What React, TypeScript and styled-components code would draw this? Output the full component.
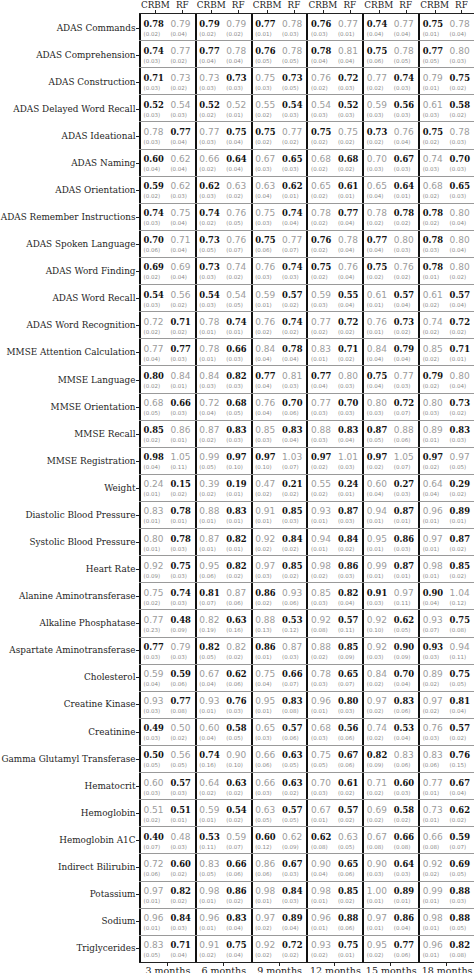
import React from "react";
import styled, { createGlobalStyle } from "styled-components";

const GlobalStyle = createGlobalStyle`
  html, body {
    margin: 0;
    padding: 0;
    background: #ffffff;
    overflow: hidden;
  }
  body {
    font-family: "DejaVu Serif", "Liberation Serif", serif;
  }
`;

const GROUPS = ["3 months", "6 months", "9 months", "12 months", "15 months", "18 months"];

// each group: crbm rf crbmStd rfStd, "*" marks the bold (better) value
const ROWS: [string, string][] = [
  ["ADAS Commands", "*0.78 0.79 0.02 0.04|*0.79 0.79 0.02 0.02|*0.77 0.78 0.01 0.03|*0.76 0.77 0.03 0.01|*0.74 0.77 0.04 0.04|*0.75 0.78 0.01 0.04"],
  ["ADAS Comprehension", "*0.74 0.77 0.03 0.02|*0.77 0.78 0.04 0.04|*0.76 0.78 0.05 0.05|*0.78 0.81 0.04 0.04|*0.75 0.78 0.06 0.05|*0.77 0.80 0.05 0.03"],
  ["ADAS Construction", "*0.71 0.73 0.03 0.02|0.73 *0.73 0.03 0.03|0.75 *0.73 0.03 0.05|0.76 *0.72 0.02 0.03|0.77 *0.74 0.02 0.03|0.79 *0.75 0.01 0.02"],
  ["ADAS Delayed Word Recall", "*0.52 0.54 0.03 0.03|*0.52 0.52 0.02 0.01|0.55 *0.54 0.02 0.03|0.54 *0.52 0.03 0.03|0.59 *0.56 0.03 0.03|0.61 *0.58 0.03 0.02"],
  ["ADAS Ideational", "0.78 *0.77 0.03 0.04|0.77 *0.75 0.03 0.04|*0.75 0.77 0.02 0.02|*0.75 0.75 0.02 0.02|*0.73 0.76 0.02 0.04|*0.75 0.78 0.02 0.03"],
  ["ADAS Naming", "*0.60 0.62 0.04 0.04|0.66 *0.64 0.02 0.04|0.67 *0.65 0.03 0.03|0.68 *0.68 0.02 0.02|0.70 *0.67 0.03 0.03|0.74 *0.70 0.03 0.03"],
  ["ADAS Orientation", "*0.59 0.62 0.02 0.03|*0.62 0.63 0.03 0.02|0.63 *0.62 0.04 0.01|0.65 *0.61 0.02 0.01|0.65 *0.64 0.04 0.01|0.68 *0.65 0.02 0.03"],
  ["ADAS Remember Instructions", "*0.74 0.75 0.03 0.04|*0.74 0.76 0.02 0.05|0.75 *0.74 0.03 0.04|0.78 *0.77 0.02 0.04|0.78 *0.78 0.02 0.02|*0.78 0.80 0.02 0.04"],
  ["ADAS Spoken Language", "*0.70 0.71 0.06 0.04|*0.73 0.76 0.05 0.07|*0.75 0.77 0.06 0.07|*0.76 0.78 0.02 0.04|*0.77 0.80 0.04 0.03|*0.78 0.80 0.03 0.04"],
  ["ADAS Word Finding", "*0.69 0.69 0.02 0.04|*0.73 0.74 0.03 0.02|0.76 *0.74 0.03 0.03|*0.75 0.76 0.02 0.04|*0.75 0.76 0.02 0.02|*0.78 0.80 0.01 0.02"],
  ["ADAS Word Recall", "*0.54 0.56 0.03 0.02|*0.54 0.54 0.03 0.05|0.59 *0.57 0.01 0.02|0.59 *0.55 0.03 0.04|0.61 *0.57 0.01 0.04|0.61 *0.57 0.02 0.04"],
  ["ADAS Word Recognition", "0.72 *0.71 0.02 0.02|0.78 *0.74 0.01 0.01|0.76 *0.74 0.02 0.02|0.77 *0.72 0.02 0.02|0.76 *0.73 0.01 0.02|0.74 *0.72 0.02 0.02"],
  ["MMSE Attention Calculation", "0.77 *0.77 0.04 0.03|0.78 *0.66 0.01 0.03|0.84 *0.78 0.04 0.04|0.83 *0.71 0.01 0.02|0.84 *0.79 0.04 0.04|0.85 *0.71 0.02 0.01"],
  ["MMSE Language", "*0.80 0.84 0.02 0.01|0.84 *0.82 0.03 0.03|*0.77 0.81 0.04 0.03|*0.77 0.80 0.04 0.03|*0.75 0.77 0.04 0.03|*0.79 0.80 0.02 0.04"],
  ["MMSE Orientation", "0.68 *0.66 0.05 0.03|0.72 *0.68 0.04 0.05|0.76 *0.70 0.04 0.06|0.77 *0.70 0.03 0.03|0.80 *0.72 0.03 0.07|0.80 *0.73 0.03 0.02"],
  ["MMSE Recall", "*0.85 0.86 0.02 0.01|0.87 *0.83 0.02 0.03|0.85 *0.83 0.03 0.04|0.88 *0.83 0.03 0.04|*0.87 0.88 0.05 0.06|0.89 *0.83 0.01 0.03"],
  ["MMSE Registration", "*0.98 1.05 0.04 0.11|0.99 *0.97 0.05 0.10|*0.97 1.03 0.10 0.07|*0.97 1.01 0.02 0.03|*0.97 1.05 0.02 0.07|*0.97 0.97 0.02 0.05"],
  ["Weight", "0.24 *0.15 0.01 0.02|0.39 *0.19 0.02 0.01|0.47 *0.21 0.02 0.02|0.55 *0.24 0.02 0.01|0.60 *0.27 0.04 0.03|0.64 *0.29 0.04 0.02"],
  ["Diastolic Blood Pressure", "0.83 *0.78 0.01 0.01|0.88 *0.83 0.01 0.01|0.91 *0.85 0.01 0.03|0.93 *0.87 0.01 0.03|0.94 *0.87 0.01 0.01|0.96 *0.89 0.01 0.01"],
  ["Systolic Blood Pressure", "0.80 *0.78 0.01 0.03|0.87 *0.82 0.01 0.01|0.92 *0.84 0.02 0.02|0.94 *0.84 0.01 0.02|0.95 *0.86 0.01 0.03|0.97 *0.87 0.01 0.02"],
  ["Heart Rate", "0.92 *0.75 0.09 0.03|0.95 *0.82 0.06 0.02|0.97 *0.85 0.03 0.02|0.98 *0.86 0.02 0.03|0.99 *0.87 0.01 0.01|0.98 *0.85 0.01 0.02"],
  ["Alanine Aminotransferase", "0.75 *0.74 0.02 0.03|*0.81 0.87 0.07 0.06|*0.86 0.93 0.02 0.06|0.85 *0.82 0.03 0.04|*0.91 0.97 0.03 0.11|*0.90 1.04 0.04 0.12"],
  ["Alkaline Phosphatase", "0.77 *0.48 0.23 0.09|0.82 *0.63 0.19 0.16|0.88 *0.53 0.13 0.12|0.92 *0.57 0.08 0.11|0.92 *0.62 0.10 0.05|0.93 *0.75 0.07 0.08"],
  ["Aspartate Aminotransferase", "*0.77 0.79 0.03 0.03|*0.82 0.82 0.05 0.02|*0.86 0.87 0.01 0.03|0.88 *0.85 0.02 0.09|0.92 *0.90 0.03 0.09|*0.93 0.94 0.03 0.11"],
  ["Cholesterol", "0.59 *0.59 0.04 0.06|0.67 *0.62 0.04 0.06|0.75 *0.66 0.04 0.07|0.78 *0.65 0.03 0.07|0.84 *0.70 0.02 0.04|0.89 *0.75 0.02 0.05"],
  ["Creatine Kinase", "0.93 *0.77 0.03 0.08|0.93 *0.76 0.01 0.03|0.95 *0.83 0.01 0.08|0.96 *0.80 0.01 0.03|0.97 *0.83 0.02 0.06|0.97 *0.81 0.02 0.04"],
  ["Creatinine", "*0.49 0.50 0.03 0.02|0.60 *0.58 0.04 0.05|0.65 *0.57 0.03 0.06|0.68 *0.56 0.03 0.06|0.74 *0.53 0.02 0.04|0.76 *0.57 0.03 0.02"],
  ["Gamma Glutamyl Transferase", "*0.50 0.56 0.05 0.05|*0.74 0.90 0.16 0.10|0.66 *0.63 0.06 0.05|0.75 *0.67 0.05 0.06|*0.82 0.83 0.09 0.06|0.83 *0.76 0.06 0.15"],
  ["Hematocrit", "0.60 *0.57 0.03 0.03|0.64 *0.63 0.02 0.02|0.66 *0.63 0.03 0.02|0.70 *0.61 0.03 0.02|0.71 *0.60 0.02 0.03|0.77 *0.67 0.01 0.04"],
  ["Hemoglobin", "0.51 *0.51 0.02 0.01|0.59 *0.54 0.01 0.02|0.63 *0.57 0.05 0.05|0.67 *0.57 0.01 0.02|0.69 *0.58 0.02 0.02|0.73 *0.62 0.01 0.02"],
  ["Hemoglobin A1C", "*0.40 0.48 0.07 0.03|*0.53 0.59 0.11 0.07|*0.60 0.62 0.12 0.09|*0.62 0.63 0.08 0.05|0.67 *0.66 0.08 0.08|0.66 *0.59 0.08 0.07"],
  ["Indirect Bilirubin", "0.72 *0.60 0.06 0.02|0.83 *0.66 0.05 0.06|0.86 *0.67 0.06 0.03|0.90 *0.65 0.04 0.06|0.90 *0.64 0.03 0.03|0.92 *0.69 0.02 0.05"],
  ["Potassium", "0.97 *0.82 0.01 0.02|0.98 *0.86 0.01 0.02|0.98 *0.84 0.01 0.03|0.98 *0.85 0.01 0.02|1.00 *0.89 0.01 0.01|0.99 *0.88 0.01 0.03"],
  ["Sodium", "0.96 *0.84 0.01 0.03|0.96 *0.83 0.01 0.04|0.97 *0.89 0.02 0.04|0.96 *0.88 0.01 0.06|0.97 *0.86 0.01 0.04|0.98 *0.88 0.01 0.05"],
  ["Triglycerides", "0.83 *0.71 0.05 0.04|0.91 *0.75 0.02 0.04|0.92 *0.72 0.02 0.02|0.93 *0.75 0.02 0.01|0.95 *0.77 0.02 0.06|0.96 *0.82 0.01 0.08"],
];

type Entry = { value: string; std: string; bold: boolean };

function parseGroup(text: string): Entry[] {
  const [a, b, s, t] = text.split(" ");
  return [
    { value: a.replace("*", ""), std: s, bold: a.startsWith("*") },
    { value: b.replace("*", ""), std: t, bold: b.startsWith("*") },
  ];
}

const LABEL_WIDTH = 139;

export default function App() {
  return (
    <>
      <GlobalStyle />
      <Figure>
        <HeaderRow>
          <span />
          {GROUPS.map((g) => (
            <HeadGroup key={g}>
              <HeadCell>CRBM</HeadCell>
              <HeadCell>RF</HeadCell>
            </HeadGroup>
          ))}
        </HeaderRow>

        <Body>
          <LabelColumn>
            {ROWS.map(([name]) => (
              <Label key={name}>{name}</Label>
            ))}
          </LabelColumn>
          <Table>
            {ROWS.map(([name, data], i) => (
              <TableRow key={name} $last={i === ROWS.length - 1}>
                {data.split("|").map((grp, j) => (
                  <Group key={j}>
                    {parseGroup(grp).map((e, k) => (
                      <Cell key={k}>
                        <Value $bold={e.bold}>{e.value}</Value>
                        <Std>({e.std})</Std>
                      </Cell>
                    ))}
                  </Group>
                ))}
              </TableRow>
            ))}
          </Table>
        </Body>

        <FooterRow>
          <span />
          {GROUPS.map((g) => (
            <FootCell key={g}>{g}</FootCell>
          ))}
        </FooterRow>
      </Figure>
    </>
  );
}

const Figure = styled.div`
  width: 474px;
  height: 973px;
  overflow: hidden;
  background: #ffffff;
`;

const HeaderRow = styled.div`
  display: grid;
  grid-template-columns: ${LABEL_WIDTH}px repeat(6, 1fr);
  height: 13px;
  overflow: hidden;
`;

const HeadGroup = styled.div`
  display: grid;
  grid-template-columns: 1fr 1fr;
  padding-left: 2px;
`;

const HeadCell = styled.div`
  position: relative;
  height: 13px;
  display: flex;
  align-items: flex-end;
  justify-content: center;
  padding-bottom: 3.5px;
  box-sizing: border-box;
  font-family: "DejaVu Serif", serif;
  font-size: 8.8px;
  line-height: 1;
  color: #222;

  &::after {
    content: "";
    position: absolute;
    left: 50%;
    bottom: 0;
    width: 0.8px;
    height: 3px;
    background: #222;
  }
`;

const Body = styled.div`
  display: grid;
  grid-template-columns: ${LABEL_WIDTH}px 1fr;
  height: 950px;
`;

const LabelColumn = styled.div`
  display: flex;
  flex-direction: column;
  padding: 1px 0;
`;

const Label = styled.div`
  flex: 1;
  position: relative;
  display: flex;
  align-items: center;
  justify-content: flex-end;
  padding-right: 3.5px;
  white-space: nowrap;
  font-family: "DejaVu Serif", serif;
  font-size: 8.85px;
  color: #1e1e1e;

  &::after {
    content: "";
    position: absolute;
    right: 0;
    top: 50%;
    width: 3px;
    height: 0.8px;
    background: #222;
  }
`;

const Table = styled.div`
  display: flex;
  flex-direction: column;
  border-top: 1px solid #222;
  border-bottom: 1px solid #222;
  box-sizing: border-box;
`;

const TableRow = styled.div<{ $last: boolean }>`
  flex: 1;
  display: grid;
  grid-template-columns: repeat(6, 1fr);
  border-bottom: ${(p) => (p.$last ? "none" : "1px solid #9a9a9a")};
`;

const Group = styled.div`
  display: grid;
  grid-template-columns: 1fr 1fr;
  border-left: 2px solid #111;
`;

const Cell = styled.div`
  display: flex;
  flex-direction: column;
  align-items: flex-start;
  padding: 4.5px 0 0 2.5px;
`;

const Value = styled.span<{ $bold: boolean }>`
  font-family: ${(p) => (p.$bold ? '"DejaVu Serif", serif' : '"DejaVu Sans", sans-serif')};
  font-weight: ${(p) => (p.$bold ? 700 : 400)};
  font-size: ${(p) => (p.$bold ? "8.4px" : "9px")};
  line-height: 10px;
  color: ${(p) => (p.$bold ? "#111" : "#9c9c9c")};
  white-space: nowrap;
`;

const Std = styled.span`
  margin-top: 2px;
  font-family: "DejaVu Sans", sans-serif;
  font-size: 5.5px;
  line-height: 7px;
  color: #8a8a8a;
  white-space: nowrap;
`;

const FooterRow = styled.div`
  display: grid;
  grid-template-columns: ${LABEL_WIDTH}px repeat(6, 1fr);
`;

const FootCell = styled.div`
  position: relative;
  text-align: center;
  padding-top: 2.5px;
  padding-left: 2px;
  font-family: "DejaVu Serif", serif;
  font-size: 9.5px;
  line-height: 1;
  color: #222;
  white-space: nowrap;

  &::before {
    content: "";
    position: absolute;
    left: 50%;
    top: 0;
    width: 0.8px;
    height: 2.5px;
    background: #222;
  }
`;
